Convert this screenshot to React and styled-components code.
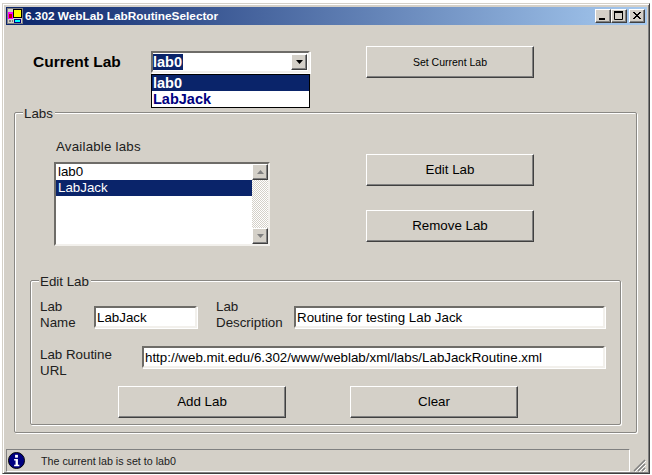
import React from 'react';
import styled, { createGlobalStyle, css } from 'styled-components';

const FACE = '#d4d0c8';
const NAVY = '#0a246a';

const GlobalStyle = createGlobalStyle`
   html, body {
      margin: 0;
      padding: 0;
      background: #ffffff;
   }
   body {
      font-family: 'Liberation Sans', Arial, sans-serif;
      font-size: 13.33px;
      color: #000000;
   }
   * {
      box-sizing: border-box;
   }
`;

const raised = css`
   background: ${FACE};
   border: 1px solid;
   border-color: #ffffff #404040 #404040 #ffffff;
   box-shadow: inset -1px -1px 0 #808080;
`;

const sunken = css`
   background: #ffffff;
   border: 2px solid;
   border-color: #6e6c68 #f2f0ec #f2f0ec #6e6c68;
   box-shadow: 1px 1px 0 #ffffff;
`;

const Window = styled.div`
   width: 648px;
   height: 471px;
   margin: 3px 0 0 2px;
   padding: 3px 2px 1px 2px;
   display: flex;
   flex-direction: column;
   background: ${FACE};
   border: 1px solid;
   border-color: #d4d0c8 #404040 #404040 #d4d0c8;
   box-shadow: inset 1px 1px 0 #ffffff, inset -1px -1px 0 #808080;
`;

const TitleBar = styled.div`
   height: 18px;
   flex: none;
   display: flex;
   align-items: center;
   padding: 0 2px 0 1px;
   margin-left: 1px;
   background: linear-gradient(90deg, ${NAVY} 0%, #a6caf0 100%);
`;

const TitleText = styled.span`
   margin-left: 2px;
   flex: 1;
   font-weight: 700;
   font-size: 11.8px;
   color: #ffffff;
   white-space: nowrap;
`;

const CaptionButtons = styled.div`
   display: flex;
   align-items: center;
`;

const CaptionButton = styled.div`
   ${raised}
   width: 16px;
   height: 14px;
   margin-left: ${(props) => (props.$gap ? '2px' : '0')};
   display: flex;
   align-items: center;
   justify-content: center;
`;

const Body = styled.div`
   flex: 1;
   display: flex;
   flex-direction: column;
   padding: 0 9px;
`;

const TopRow = styled.div`
   height: 87px;
   flex: none;
   display: flex;
   align-items: flex-start;
`;

const CurrentLabel = styled.div`
   width: 118px;
   margin: 27px 0 0 19px;
   font-weight: 700;
   font-size: 15.5px;
   line-height: 20px;
`;

const ComboWrap = styled.div`
   position: relative;
   width: 159px;
   height: 22px;
   margin-top: 26px;
`;

const ComboBox = styled.div`
   ${sunken}
   height: 22px;
   padding: 1px 1px 1px 0;
   display: flex;
   justify-content: space-between;
`;

const ComboValue = styled.span`
   align-self: stretch;
   padding: 0 1px 0 0;
   background: ${NAVY};
   color: #ffffff;
   font-weight: 700;
   font-size: 14.5px;
   line-height: 16px;
`;

const ArrowButton = styled.div`
   ${raised}
   width: 16px;
   height: 16px;
   display: flex;
   align-items: center;
   justify-content: center;
`;

const DropDown = styled.div`
   position: absolute;
   top: 23px;
   left: 0;
   width: 159px;
   height: 34px;
   background: #ffffff;
   border: 1px solid #000000;
   z-index: 2;
`;

const DropItem = styled.div`
   height: 16px;
   padding-left: 1px;
   font-weight: 700;
   font-size: 14.5px;
   line-height: 16px;
   background: ${(props) => (props.$selected ? NAVY : '#ffffff')};
   color: ${(props) => (props.$selected ? '#ffffff' : '#000080')};
`;

const PushButton = styled.div`
   ${raised}
   flex: none;
   width: 168px;
   height: 32px;
   padding-bottom: ${(props) => (props.$small ? '0' : '2px')};
   display: flex;
   align-items: center;
   justify-content: center;
   font-size: ${(props) => (props.$small ? '10.5px' : '13.33px')};
`;

const SetButton = styled(PushButton)`
   margin: 21px 0 0 56px;
`;

const GroupBox = styled.div`
   position: relative;
   border: 1px solid #8a8884;
   border-radius: 2px;
   box-shadow: inset 1px 1px 0 #ffffff, 1px 1px 0 #ffffff;
`;

const Legend = styled.span`
   position: absolute;
   top: -6px;
   left: 8px;
   padding: 0 2px 0 1px;
   background: ${FACE};
   line-height: 13px;
   color: #202020;
`;

const LabsGroup = styled(GroupBox)`
   width: 623px;
   height: 321px;
   flex: none;
   padding: 0 15px;
`;

const LabsRow = styled.div`
   height: 167px;
   display: flex;
`;

const ListColumn = styled.div`
   width: 216px;
   margin: 26px 0 0 24px;
`;

const ListCaption = styled.div`
   height: 16px;
   margin: 0 0 7px 2px;
   line-height: 16px;
   letter-spacing: 0.2px;
   color: #202020;
`;

const ListBox = styled.div`
   ${sunken}
   box-shadow: none;
   height: 84px;
   display: flex;
`;

const ListItems = styled.div`
   flex: 1;
`;

const ListItem = styled.div`
   height: 16px;
   padding-left: 2px;
   line-height: 16px;
   background: ${(props) => (props.$selected ? NAVY : 'transparent')};
   color: ${(props) => (props.$selected ? '#ffffff' : '#000000')};
`;

const ScrollBar = styled.div`
   width: 16px;
   display: flex;
   flex-direction: column;
   justify-content: space-between;
   background: repeating-conic-gradient(#ffffff 0 25%, ${FACE} 0 50%) 0 0 / 2px 2px;
`;

const ScrollButton = styled.div`
   ${raised}
   height: 16px;
   display: flex;
   align-items: center;
   justify-content: center;
`;

const ActionColumn = styled.div`
   margin: 41px 0 0 96px;
   display: flex;
   flex-direction: column;
   gap: 24px;
`;

const EditGroup = styled(GroupBox)`
   height: 145px;
   padding: 0 15px 0 9px;
`;

const FieldsTop = styled.div`
   padding-top: 25px;
`;

const FieldRow = styled.div`
   display: flex;
   align-items: flex-start;
   height: 40px;
`;

const FieldLabel = styled.div`
   flex: none;
   width: ${(props) => props.$width}px;
   margin-top: ${(props) => props.$top}px;
   margin-left: ${(props) => props.$left || 0}px;
   line-height: 16px;
   color: #202020;
`;

const TextField = styled.div`
   ${sunken}
   height: 22px;
   padding-left: 1px;
   line-height: 20px;
   white-space: nowrap;
   overflow: hidden;
   flex: ${(props) => (props.$width ? 'none' : '1')};
   width: ${(props) => (props.$width ? `${props.$width}px` : 'auto')};
`;

const ButtonRow = styled.div`
   display: flex;
   gap: 64px;
   padding-left: 78px;
`;

const StatusBar = styled.div`
   position: relative;
   height: 23px;
   flex: none;
   display: flex;
   margin: auto -9px 0 -8px;
`;

const StatusPane = styled.div`
   width: 624px;
   display: flex;
   align-items: center;
   border: 1px solid;
   border-color: #808080 #ffffff #ffffff #808080;
   font-size: 10.7px;
   color: #202020;
`;

const StatusIcon = styled.svg`
   margin-left: 1px;
   flex: none;
`;

const StatusText = styled.span`
   margin-left: 16px;
`;

const Grip = styled.svg`
   position: absolute;
   right: 1px;
   bottom: 0;
`;

const Glyph = styled.svg`
   display: block;
`;

const AppIcon = () => (
   <Glyph width='16' height='16' viewBox='0 0 16 16'>
      <rect x='0' y='0' width='16' height='16' fill='#808080' />
      <rect x='1' y='1' width='14' height='14' fill='#d4d0c8' />
      <rect x='1' y='4' width='5' height='7' fill='#ff00ff' />
      <rect x='2' y='6' width='3' height='4' fill='#c00000' />
      <rect x='6' y='1' width='9' height='9' fill='#000000' />
      <rect x='7' y='2' width='7' height='7' fill='#ffff00' />
      <rect x='7' y='11' width='7' height='4' fill='#000080' />
      <rect x='8' y='12' width='5' height='2' fill='#00ffff' />
      <rect x='2' y='12' width='2' height='2' fill='#808080' />
      <rect x='5' y='12' width='1' height='2' fill='#808080' />
   </Glyph>
);

const App = () => {
   return (
      <>
         <GlobalStyle />
         <Window>
            <TitleBar>
               <AppIcon />
               <TitleText>6.302 WebLab LabRoutineSelector</TitleText>
               <CaptionButtons>
                  <CaptionButton>
                     <Glyph width='10' height='10' viewBox='0 0 10 10'>
                        <rect x='1' y='7' width='6' height='2' fill='#000' />
                     </Glyph>
                  </CaptionButton>
                  <CaptionButton>
                     <Glyph width='10' height='10' viewBox='0 0 10 10'>
                        <path d='M0.5 1.5h8v7h-8z' fill='none' stroke='#000' />
                        <rect x='0' y='0' width='9' height='2' fill='#000' />
                     </Glyph>
                  </CaptionButton>
                  <CaptionButton $gap>
                     <Glyph width='10' height='10' viewBox='0 0 10 10'>
                        <path d='M1 1l7 7M2 1l7 7M8 1l-7 7M9 1l-7 7' stroke='#000' fill='none' />
                     </Glyph>
                  </CaptionButton>
               </CaptionButtons>
            </TitleBar>
            <Body>
               <TopRow>
                  <CurrentLabel>Current Lab</CurrentLabel>
                  <ComboWrap>
                     <ComboBox>
                        <ComboValue>lab0</ComboValue>
                        <ArrowButton>
                           <Glyph width='7' height='4' viewBox='0 0 7 4'>
                              <path d='M0 0h7L3.5 4z' fill='#000' />
                           </Glyph>
                        </ArrowButton>
                     </ComboBox>
                     <DropDown>
                        <DropItem $selected>lab0</DropItem>
                        <DropItem>LabJack</DropItem>
                     </DropDown>
                  </ComboWrap>
                  <SetButton $small>Set Current Lab</SetButton>
               </TopRow>
               <LabsGroup>
                  <Legend>Labs</Legend>
                  <LabsRow>
                     <ListColumn>
                        <ListCaption>Available labs</ListCaption>
                        <ListBox>
                           <ListItems>
                              <ListItem>lab0</ListItem>
                              <ListItem $selected>LabJack</ListItem>
                           </ListItems>
                           <ScrollBar>
                              <ScrollButton>
                                 <Glyph width='7' height='4' viewBox='0 0 7 4'>
                                    <path d='M3.5 0L7 4H0z' fill='#808080' />
                                 </Glyph>
                              </ScrollButton>
                              <ScrollButton>
                                 <Glyph width='7' height='4' viewBox='0 0 7 4'>
                                    <path d='M0 0h7L3.5 4z' fill='#808080' />
                                 </Glyph>
                              </ScrollButton>
                           </ScrollBar>
                        </ListBox>
                     </ListColumn>
                     <ActionColumn>
                        <PushButton>Edit Lab</PushButton>
                        <PushButton>Remove Lab</PushButton>
                     </ActionColumn>
                  </LabsRow>
                  <EditGroup>
                     <Legend>Edit Lab</Legend>
                     <FieldsTop>
                        <FieldRow>
                           <FieldLabel $width={54} $top={-7}>
                              Lab
                              <br />
                              Name
                           </FieldLabel>
                           <TextField $width={103}>LabJack</TextField>
                           <FieldLabel $width={78} $top={-7} $left={19}>
                              Lab
                              <br />
                              Description
                           </FieldLabel>
                           <TextField>Routine for testing Lab Jack</TextField>
                        </FieldRow>
                        <FieldRow>
                           <FieldLabel $width={102} $top={1}>
                              Lab Routine
                              <br />
                              URL
                           </FieldLabel>
                           <TextField>http://web.mit.edu/6.302/www/weblab/xml/labs/LabJackRoutine.xml</TextField>
                        </FieldRow>
                     </FieldsTop>
                     <ButtonRow>
                        <PushButton>Add Lab</PushButton>
                        <PushButton>Clear</PushButton>
                     </ButtonRow>
                  </EditGroup>
               </LabsGroup>
               <StatusBar>
                  <StatusPane>
                     <StatusIcon width='17' height='17' viewBox='0 0 18 18'>
                        <circle cx='9' cy='9' r='8.5' fill='#000080' stroke='#000000' />
                        <rect x='7.5' y='3' width='3' height='3' fill='#ffffff' />
                        <path d='M6.5 7.5h4v6h1.5v1.5h-5.5v-1.5h1.5v-4.5h-1.5z' fill='#ffffff' />
                     </StatusIcon>
                     <StatusText>The current lab is set to lab0</StatusText>
                  </StatusPane>
                  <Grip width='13' height='13' viewBox='0 0 13 13'>
                     <path d='M12 1L1 12M12 5L5 12M12 9L9 12' stroke='#808080' fill='none' strokeWidth='1.5' />
                     <path d='M13 2L2 13M13 6L6 13M13 10L10 13' stroke='#ffffff' fill='none' />
                  </Grip>
               </StatusBar>
            </Body>
         </Window>
      </>
   );
};

export default App;
